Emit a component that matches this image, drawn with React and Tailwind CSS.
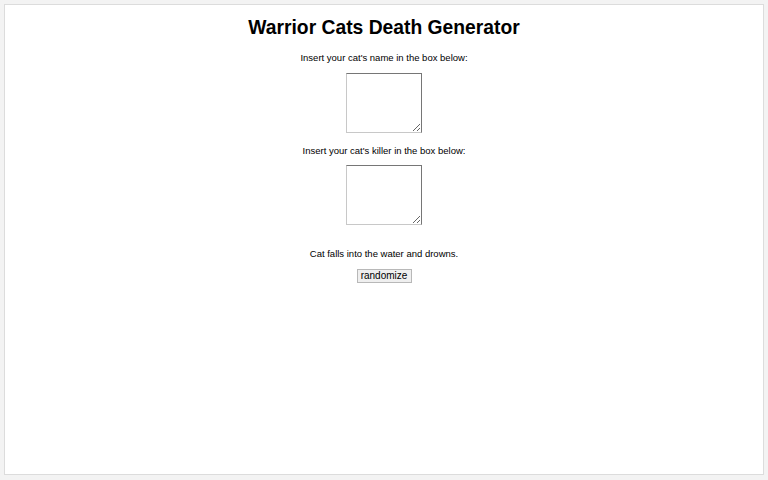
export default function App() {
  return (
    <div className="w-[768px] h-[480px] bg-[#f3f3f3] pt-1 pl-1" style={{ fontFamily: '"Liberation Sans", Arial, sans-serif' }}>
      <div className="w-[760px] h-[471px] bg-white border border-[#dcdcdc] flex flex-col items-center text-black">
        <h1 className="mt-[11px] text-[19.3px] leading-[24px] font-bold">Warrior Cats Death Generator</h1>
        <p className="mt-[11px] text-[9.5px] leading-[14px]">Insert your cat's name in the box below:</p>
        <textarea className="mt-[8px] w-[76px] h-[60px] bg-white border border-t-[#767676] border-r-[#767676] border-l-[#c8c8c8] border-b-[#c8c8c8] resize outline-none" />
        <p className="mt-[11px] text-[9.5px] leading-[14px]">Insert your cat's killer in the box below:</p>
        <textarea className="mt-[7px] w-[76px] h-[60px] bg-white border border-t-[#767676] border-r-[#767676] border-l-[#c8c8c8] border-b-[#c8c8c8] resize outline-none" />
        <p className="mt-[22px] text-[9.5px] leading-[14px]">Cat falls into the water and drowns.</p>
        <button className="mt-[8px] w-[55px] h-[14px] bg-[#efefef] border border-[#b8b8b8] text-[10px] leading-[12px] flex items-center justify-center">randomize</button>
      </div>
    </div>
  );
}
